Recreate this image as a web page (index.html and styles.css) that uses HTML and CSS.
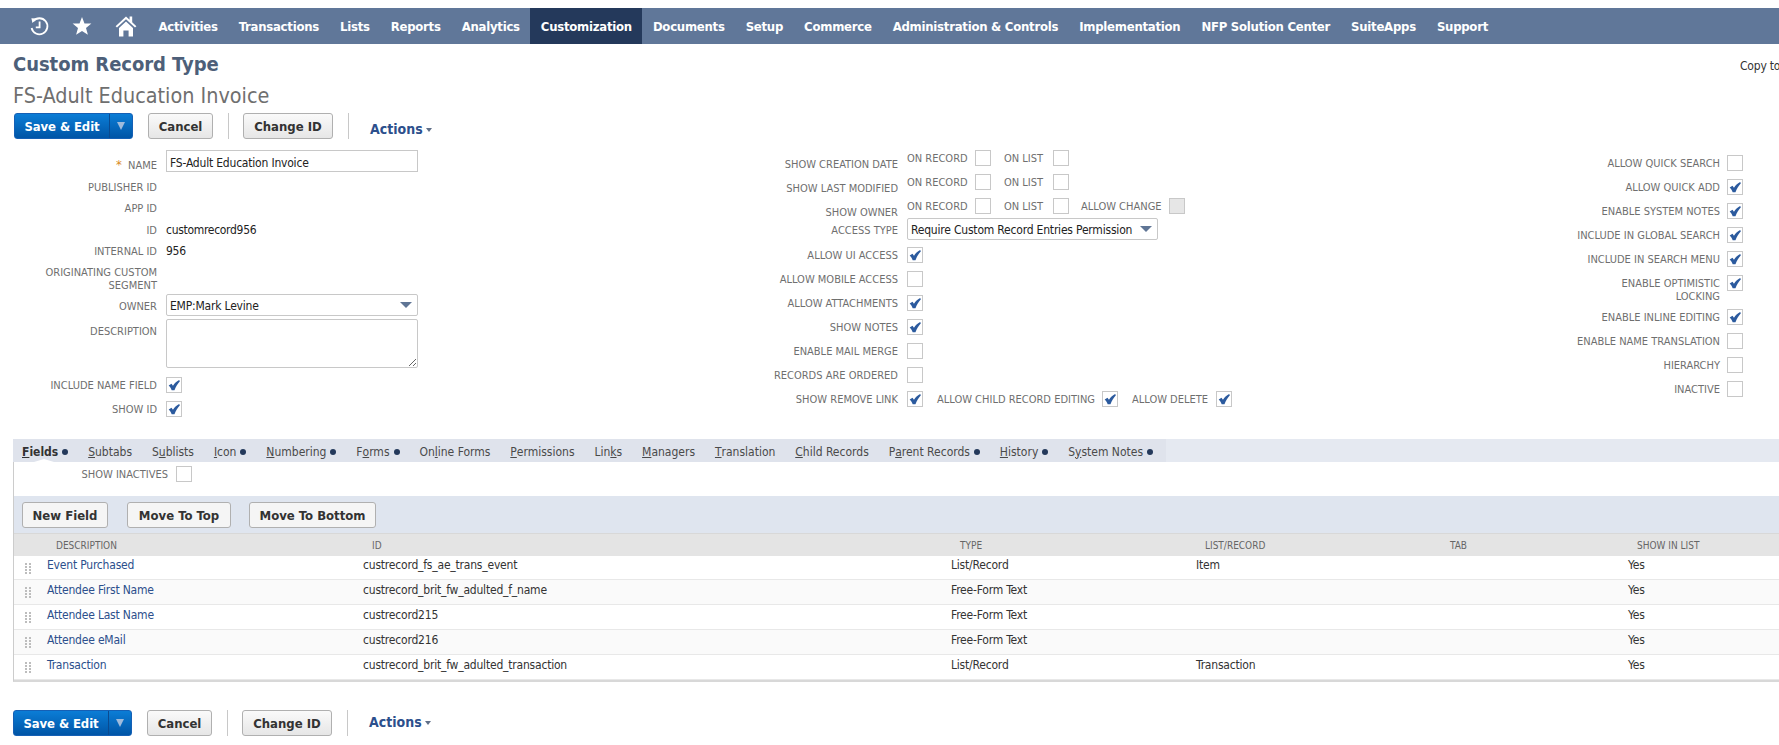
FILE: index.html
```html
<!DOCTYPE html>
<html lang="en">
<head>
<meta charset="utf-8">
<title>Custom Record Type</title>
<link rel="stylesheet" href="styles.css">
</head>
<body>
<svg class="defs" width="0" height="0" aria-hidden="true">
  <symbol id="chk" viewBox="0 0 15 15"><path d="M1.8 8 L4.8 6.2 L6.4 8.4 C8 5.8 10 3.8 13 2.2 L13.8 3.4 C11.4 6 9.6 9 8 13 L5 13 C4.2 10.8 3.2 9.4 1.8 8 Z" fill="#2b5a9e"/></symbol>
  <symbol id="grip" viewBox="0 0 6 11"><path d="M0 0h2v2H0zM4 0h2v2H4zM0 3h2v2H0zM4 3h2v2H4zM0 6h2v2H0zM4 6h2v2H4zM0 9h2v2H0zM4 9h2v2H4z" fill="#bdbdbd"/></symbol>
</svg>
<nav class="nav">
  <a class="nav-icon nav-icon-history"><svg width="21" height="21" viewBox="0 0 21 21"><path d="M4.2 5.2 A8 8 0 1 1 2.6 12" fill="none" stroke="#fff" stroke-width="1.8"/><path d="M2.4 2.2 L7.8 2.4 L3.4 7 Z" fill="#fff"/><path d="M10.6 5.6 V11.4 H6.8" fill="none" stroke="#fff" stroke-width="1.8"/></svg></a>
  <a class="nav-icon nav-icon-star"><svg width="20" height="20" viewBox="0 0 20 20"><path d="M10 1 L12.5 7.4 L19.4 7.6 L14 11.9 L15.9 18.7 L10 14.9 L4.1 18.7 L6 11.9 L.6 7.6 L7.5 7.4 Z" fill="#fff"/></svg></a>
  <a class="nav-icon nav-icon-home"><svg width="22" height="22" viewBox="0 0 22 22"><path d="M.6 11.2 L11 1.4 L14.6 4.8 V1.4 H17.2 V7.2 L21.4 11.2 L20 12.4 L11 4.2 L2 12.4 Z" fill="#fff"/><path d="M4 13 L11 6.4 L18 13 V21.4 H13.6 V15.6 H8.4 V21.4 H4 Z" fill="#fff"/></svg></a>
  <a class="nav-item">Activities</a>
  <a class="nav-item">Transactions</a>
  <a class="nav-item">Lists</a>
  <a class="nav-item">Reports</a>
  <a class="nav-item">Analytics</a>
  <a class="nav-item nav-active">Customization</a>
  <a class="nav-item">Documents</a>
  <a class="nav-item">Setup</a>
  <a class="nav-item">Commerce</a>
  <a class="nav-item">Administration &amp; Controls</a>
  <a class="nav-item">Implementation</a>
  <a class="nav-item">NFP Solution Center</a>
  <a class="nav-item">SuiteApps</a>
  <a class="nav-item">Support</a>
</nav>
<main class="page">
  <header class="title-row">
    <h1 class="title">Custom Record Type</h1>
    <div class="copy">Copy to Account</div>
  </header>
  <h2 class="subtitle">FS-Adult Education Invoice</h2>
  <div class="actions">
    <div class="btn-split"><span class="btn-split-main">Save &amp; Edit</span><span class="btn-split-arrow"><i class="arrow-down"></i></span></div>
    <button class="btn btn-cancel">Cancel</button>
    <span class="sep"></span>
    <button class="btn btn-change">Change ID</button>
    <span class="sep"></span>
    <a class="actions-link">Actions<i class="caret"></i></a>
  </div>

  <section class="form">
    <div class="col col-1">
      <div class="lbl lbl-name"><span class="req">*</span> NAME</div><div><input class="input" type="text" value="FS-Adult Education Invoice"></div>
      <div class="lbl">PUBLISHER ID</div><div></div>
      <div class="lbl">APP ID</div><div></div>
      <div class="lbl">ID</div><div class="val">customrecord956</div>
      <div class="lbl">INTERNAL ID</div><div class="val">956</div>
      <div class="lbl lbl-tall">ORIGINATING CUSTOM<br>SEGMENT</div><div></div>
      <div class="lbl lbl-sel">OWNER</div><div><div class="select select-owner">EMP:Mark Levine<i class="sel-arrow"></i></div></div>
      <div class="lbl lbl-desc">DESCRIPTION</div><div><textarea class="textarea"></textarea></div>
      <div class="lbl lbl-chk">INCLUDE NAME FIELD</div><div><span class="cb"><svg><use href="#chk"/></svg></span></div>
      <div class="lbl lbl-chk">SHOW ID</div><div><span class="cb"><svg><use href="#chk"/></svg></span></div>
    </div>

    <div class="col col-2">
      <div class="lbl lbl-low">SHOW CREATION DATE</div><div class="inline"><span class="sub sub-rec">ON RECORD</span><span class="cb"></span><span class="sub sub-list">ON LIST</span><span class="cb"></span></div>
      <div class="lbl lbl-low">SHOW LAST MODIFIED</div><div class="inline"><span class="sub sub-rec">ON RECORD</span><span class="cb"></span><span class="sub sub-list">ON LIST</span><span class="cb"></span></div>
      <div class="lbl lbl-low">SHOW OWNER</div><div class="inline"><span class="sub sub-rec">ON RECORD</span><span class="cb"></span><span class="sub sub-list">ON LIST</span><span class="cb"></span><span class="sub sub-change">ALLOW CHANGE</span><span class="cb cb-off"></span></div>
      <div class="lbl lbl-sel">ACCESS TYPE</div><div><div class="select select-access">Require Custom Record Entries Permission<i class="sel-arrow"></i></div></div>
      <div class="lbl lbl-chk">ALLOW UI ACCESS</div><div><span class="cb"><svg><use href="#chk"/></svg></span></div>
      <div class="lbl lbl-chk">ALLOW MOBILE ACCESS</div><div><span class="cb"></span></div>
      <div class="lbl lbl-chk">ALLOW ATTACHMENTS</div><div><span class="cb"><svg><use href="#chk"/></svg></span></div>
      <div class="lbl lbl-chk">SHOW NOTES</div><div><span class="cb"><svg><use href="#chk"/></svg></span></div>
      <div class="lbl lbl-chk">ENABLE MAIL MERGE</div><div><span class="cb"></span></div>
      <div class="lbl lbl-chk">RECORDS ARE ORDERED</div><div><span class="cb"></span></div>
      <div class="lbl lbl-chk">SHOW REMOVE LINK</div><div class="inline"><span class="cb"><svg><use href="#chk"/></svg></span><span class="sub sub-child">ALLOW CHILD RECORD EDITING</span><span class="cb"><svg><use href="#chk"/></svg></span><span class="sub sub-del">ALLOW DELETE</span><span class="cb"><svg><use href="#chk"/></svg></span></div>
    </div>

    <div class="col col-3">
      <div class="lbl lbl-chk">ALLOW QUICK SEARCH</div><div><span class="cb"></span></div>
      <div class="lbl lbl-chk">ALLOW QUICK ADD</div><div><span class="cb"><svg><use href="#chk"/></svg></span></div>
      <div class="lbl lbl-chk">ENABLE SYSTEM NOTES</div><div><span class="cb"><svg><use href="#chk"/></svg></span></div>
      <div class="lbl lbl-chk">INCLUDE IN GLOBAL SEARCH</div><div><span class="cb"><svg><use href="#chk"/></svg></span></div>
      <div class="lbl lbl-chk">INCLUDE IN SEARCH MENU</div><div><span class="cb"><svg><use href="#chk"/></svg></span></div>
      <div class="lbl lbl-chk">ENABLE OPTIMISTIC<br>LOCKING</div><div><span class="cb"><svg><use href="#chk"/></svg></span></div>
      <div class="lbl lbl-chk">ENABLE INLINE EDITING</div><div><span class="cb"><svg><use href="#chk"/></svg></span></div>
      <div class="lbl lbl-chk">ENABLE NAME TRANSLATION</div><div><span class="cb"></span></div>
      <div class="lbl lbl-chk">HIERARCHY</div><div><span class="cb"></span></div>
      <div class="lbl lbl-chk">INACTIVE</div><div><span class="cb"></span></div>
    </div>
  </section>

  <div class="tabs">
    <div class="tabs-list">
      <a class="tab tab-on"><u>F</u>ields<i class="dot"></i></a>
      <a class="tab"><u>S</u>ubtabs</a>
      <a class="tab">S<u>u</u>blists</a>
      <a class="tab"><u>I</u>con<i class="dot"></i></a>
      <a class="tab"><u>N</u>umbering<i class="dot"></i></a>
      <a class="tab">F<u>o</u>rms<i class="dot"></i></a>
      <a class="tab">On<u>l</u>ine Forms</a>
      <a class="tab"><u>P</u>ermissions</a>
      <a class="tab">Lin<u>k</u>s</a>
      <a class="tab"><u>M</u>anagers</a>
      <a class="tab"><u>T</u>ranslation</a>
      <a class="tab"><u>C</u>hild Records</a>
      <a class="tab">P<u>a</u>rent Records<i class="dot"></i></a>
      <a class="tab"><u>H</u>istory<i class="dot"></i></a>
      <a class="tab">S<u>y</u>stem Notes<i class="dot"></i></a>
    </div>
  </div>

  <section class="panel">
    <div class="inactives"><span class="lbl-inline">SHOW INACTIVES</span><span class="cb"></span></div>
    <div class="toolbar">
      <button class="btn btn-flat btn-new">New Field</button>
      <button class="btn btn-flat btn-top">Move To Top</button>
      <button class="btn btn-flat btn-bottom">Move To Bottom</button>
    </div>
    <div class="grid-row grid-head">
      <span class="c-handle"></span><span class="c-desc">DESCRIPTION</span><span class="c-id">ID</span><span class="c-type">TYPE</span><span class="c-list">LIST/RECORD</span><span class="c-tab">TAB</span><span class="c-show">SHOW IN LIST</span>
    </div>
    <div class="grid-row">
      <span class="c-handle"><svg class="handle"><use href="#grip"/></svg></span><a class="c-desc">Event Purchased</a><span class="c-id">custrecord_fs_ae_trans_event</span><span class="c-type">List/Record</span><span class="c-list">Item</span><span class="c-tab"></span><span class="c-show">Yes</span>
    </div>
    <div class="grid-row grid-alt">
      <span class="c-handle"><svg class="handle"><use href="#grip"/></svg></span><a class="c-desc">Attendee First Name</a><span class="c-id">custrecord_brit_fw_adulted_f_name</span><span class="c-type">Free-Form Text</span><span class="c-list"></span><span class="c-tab"></span><span class="c-show">Yes</span>
    </div>
    <div class="grid-row">
      <span class="c-handle"><svg class="handle"><use href="#grip"/></svg></span><a class="c-desc">Attendee Last Name</a><span class="c-id">custrecord215</span><span class="c-type">Free-Form Text</span><span class="c-list"></span><span class="c-tab"></span><span class="c-show">Yes</span>
    </div>
    <div class="grid-row grid-alt">
      <span class="c-handle"><svg class="handle"><use href="#grip"/></svg></span><a class="c-desc">Attendee eMail</a><span class="c-id">custrecord216</span><span class="c-type">Free-Form Text</span><span class="c-list"></span><span class="c-tab"></span><span class="c-show">Yes</span>
    </div>
    <div class="grid-row">
      <span class="c-handle"><svg class="handle"><use href="#grip"/></svg></span><a class="c-desc">Transaction</a><span class="c-id">custrecord_brit_fw_adulted_transaction</span><span class="c-type">List/Record</span><span class="c-list">Transaction</span><span class="c-tab"></span><span class="c-show">Yes</span>
    </div>
  </section>

  <div class="actions actions-bottom">
    <div class="btn-split"><span class="btn-split-main">Save &amp; Edit</span><span class="btn-split-arrow"><i class="arrow-down"></i></span></div>
    <button class="btn btn-cancel">Cancel</button>
    <span class="sep"></span>
    <button class="btn btn-change">Change ID</button>
    <span class="sep"></span>
    <a class="actions-link">Actions<i class="caret"></i></a>
  </div>
</main>
</body>
</html>
```

FILE: styles.css
```css
* { box-sizing: border-box; }
html, body { margin: 0; padding: 0; height: 745px; overflow: hidden; background: #fff; }
body { font-family: "DejaVu Sans Condensed", "DejaVu Sans", Tahoma, sans-serif; font-stretch: condensed; font-size: 12px; color: #222; }
.defs { position: absolute; }

.nav { margin-top: 8px; height: 36px; background: #607799; display: flex; align-items: stretch; }
.nav-icon { display: flex; align-items: center; }
.nav-icon-history { margin-left: 29px; width: 43px; }
.nav-icon-star { width: 43px; }
.nav-icon-home { width: 33px; }
.nav-item { display: flex; align-items: center; padding: 0 10.5px; color: #fff; font-weight: 700; font-size: 13px; letter-spacing: -0.25px; white-space: nowrap; }
.nav-active { background: #24395b; }

.title-row { display: flex; justify-content: space-between; height: 38px; padding-left: 13px; }
.title { margin: 5px 0 0; font-size: 20px; line-height: 30px; font-weight: 700; letter-spacing: -0.05px; color: #4d5f79; }
.copy { width: 39px; margin-top: 14px; overflow: hidden; white-space: nowrap; color: #333; line-height: 16px; letter-spacing: -0.2px; }
.subtitle { margin: 0; height: 31px; padding-left: 13px; font-size: 21.4px; line-height: 28px; font-weight: 400; color: #6f6f6f; }

.actions { display: flex; align-items: center; height: 26px; margin-left: 14px; }
.btn-split { display: flex; width: 119px; height: 26px; border-radius: 3px; background: linear-gradient(#0b7dd6, #0055a6); color: #fff; font-weight: 700; font-size: 13px; letter-spacing: -0.1px; border: 1px solid #1560b5; }
.btn-split-main { width: 94px; display: flex; align-items: center; justify-content: center; }
.btn-split-arrow { flex: 1; display: flex; align-items: center; justify-content: center; border-left: 1px solid #0a4a90; }
.arrow-down { width: 0; height: 0; border-left: 4px solid transparent; border-right: 4px solid transparent; border-top: 8px solid #9fbbdc; }
.btn { height: 26px; padding: 0; border: 1px solid #b0b0b0; border-radius: 3px; background: linear-gradient(#fafafa, #e6e6e6); color: #333; font: inherit; font-stretch: condensed; font-weight: 700; font-size: 13px; }
.btn-cancel { width: 65px; margin-left: 15px; }
.btn-change { width: 90px; }
.sep { width: 1px; height: 26px; background: #c8c8c8; margin: 0 14px 0 15px; }
.actions-link { margin-left: 7px; color: #2c4f8c; font-weight: 700; font-size: 14px; display: flex; align-items: center; padding-top: 6px; }
.actions-bottom .actions-link { padding-top: 0; padding-bottom: 3px; }
.caret { margin-left: 3px; margin-top: 2px; width: 0; height: 0; border-left: 3px solid transparent; border-right: 3px solid transparent; border-top: 4px solid #5f6f88; }

.form { display: flex; height: 289px; margin-top: 11px; }
.col { display: grid; align-content: start; column-gap: 9px; }
.col-1 { grid-template-columns: 157px 252px; grid-template-rows: 27px 21px 22px 21px 21px 32px 25px 58px 24px 24px; }
.col-2 { margin-left: 280px; grid-template-columns: 200px 1fr; grid-template-rows: 24px 24px 20px 29px repeat(7, 24px); }
.col-3 { margin-left: auto; margin-right: 36px; padding-top: 5px; column-gap: 7px; grid-template-columns: 162px 16px; grid-template-rows: repeat(5, 24px) 34px repeat(4, 24px); }

.lbl { text-align: right; font-size: 11px; line-height: 13px; color: #6f6f6f; padding-top: 4px; white-space: nowrap; }
.lbl-name { padding-top: 8px; }
.lbl-tall { padding-top: 4px; }
.lbl-sel { padding-top: 6px; }
.lbl-desc { padding-top: 6px; }
.lbl-chk { padding-top: 2px; }
.lbl-low { padding-top: 8px; }
.req { color: #d98a1f; font-size: 13px; margin-right: 3px; }
.val { padding-top: 3px; line-height: 15px; color: #222; letter-spacing: -0.3px; }
.input { width: 252px; height: 22px; border: 1px solid #c8c8c8; padding: 4px 3px 0; font: inherit; font-stretch: condensed; letter-spacing: -0.2px; color: #222; display: block; }
.select { position: relative; height: 22px; border: 1px solid #c8c8c8; border-radius: 2px; padding: 1px 3px 0; line-height: 20px; color: #222; letter-spacing: -0.2px; }
.select-owner { width: 252px; }
.select-access { width: 251px; }
.sel-arrow { position: absolute; right: 5px; top: 7px; width: 0; height: 0; border-left: 6px solid transparent; border-right: 6px solid transparent; border-top: 6px solid #5f7595; }
.textarea { display: block; width: 252px; height: 49px; border: 1px solid #c8c8c8; border-radius: 2px; margin: 0; padding: 2px; }

.cb { display: block; flex: none; width: 16px; height: 16px; border: 1px solid #c8c8c8; background: #fff; }
.cb svg { display: block; width: 14px; height: 14px; }
.cb-off { background: #e6e6e6; }
.inline { display: flex; align-items: flex-start; }
.sub { font-size: 11px; line-height: 13px; color: #6f6f6f; white-space: nowrap; padding-top: 2px; }
.sub-rec { width: 68px; }
.sub-list { width: 49px; margin-left: 13px; }
.sub-change { width: 88px; margin-left: 12px; }
.sub-child { width: 165px; margin-left: 14px; }
.sub-del { width: 84px; margin-left: 14px; }

.tabs { height: 23px; background: #e5e9f1; display: flex; margin-left: 13px; }
.tabs-list { display: flex; height: 23px; background: #dfe3ec; width: 1153px; padding-left: 9px; padding-top: 2px; }
.tab { position: relative; display: flex; align-items: center; margin-right: 19.9px; color: #4a4a4a; white-space: nowrap; }
.tab-on { color: #333; font-weight: 700; }
.tab-on::after { content: ""; position: absolute; left: 12px; bottom: 0; width: 0; height: 0; border-left: 10px solid transparent; border-right: 10px solid transparent; border-bottom: 3px solid #fff; }
.dot { display: inline-block; width: 6px; height: 6px; border-radius: 50%; background: #24395b; margin-left: 4px; }

.panel { margin-left: 13px; border-left: 1px solid #ccc; border-bottom: 2px solid #d8d8d8; }
.inactives { height: 34px; display: flex; align-items: flex-start; padding-top: 4px; padding-left: 66px; }
.lbl-inline { width: 88px; text-align: right; font-size: 11px; line-height: 13px; color: #6f6f6f; padding-top: 2px; margin-right: 8px; }
.toolbar { height: 37px; background: #dfe5ef; display: flex; align-items: flex-start; padding: 6px 0 0 8px; }
.btn-flat { background: #f5f5f5; }
.btn-new { width: 86px; margin-right: 19px; }
.btn-top { width: 104px; margin-right: 18px; }
.btn-bottom { width: 127px; }
.grid-row { display: grid; grid-template-columns: 33px 316px 588px 245px 245px 187px 1fr; height: 25px; border-bottom: 1px solid #e8e8e8; line-height: 16px; }
.grid-row > * { padding-top: 2px; white-space: nowrap; color: #333; letter-spacing: -0.2px; }
.grid-head { height: 23px; background: #e4e4e4; border-top: 1px solid #d8d8d8; border-bottom: 0; }
.grid-head > * { padding: 5px 0 0 9px; font-size: 10px; line-height: 13px; color: #666; letter-spacing: 0; }
.grid-head + .grid-row { height: 24px; }
.grid-head + .grid-row > * { padding-top: 1px; }
.grid-row a.c-desc { color: #2c4f8c; }
.grid-alt { background: #fafafa; }
.grid-row > .c-handle { display: block; padding: 7px 0 0 11px; }
.handle { display: block; width: 6px; height: 11px; }
.actions-bottom { margin-top: 28px; margin-left: 13px; }
```
